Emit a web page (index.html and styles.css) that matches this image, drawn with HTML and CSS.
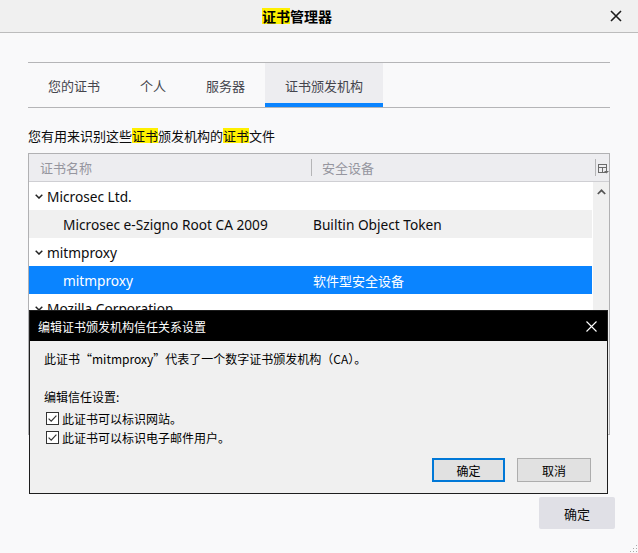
FILE: index.html
```html
<!DOCTYPE html>
<html lang="zh-CN">
<head>
    <meta charset="UTF-8">
    <title>证书管理器</title>
    <link rel="stylesheet" href="styles.css">
</head>
<body>

<div class="window">

    <header class="titlebar">
        <h1 class="title"><mark>证书</mark>管理器</h1>
        <button class="win-close" aria-label="关闭">
            <svg width="12" height="12" viewBox="0 0 12 12"><path d="M1 1 L11 11 M11 1 L1 11" stroke="#1b1b1b" stroke-width="1.6"/></svg>
        </button>
    </header>

    <main class="content">

        <nav class="tabs">
            <button class="tab">您的证书</button>
            <button class="tab">个人</button>
            <button class="tab">服务器</button>
            <button class="tab active">证书颁发机构</button>
        </nav>

        <p class="intro">您有用来识别这些<mark>证书</mark>颁发机构的<mark>证书</mark>文件</p>

        <div class="tree">
            <div class="tree-head">
                <div class="col col-name">证书名称</div>
                <span class="col-sep"></span>
                <div class="col col-device">安全设备</div>
                <span class="col-sep"></span>
                <div class="col-picker">
                    <svg width="11" height="10" viewBox="0 0 11 10">
                        <rect x="0.5" y="0.5" width="8" height="8" fill="none" stroke="#6b6b6b"/>
                        <path d="M0.5 3.5 H8.5 M4.5 3.5 V8.5" stroke="#6b6b6b"/>
                        <path d="M6 7 H11 L8.5 9.6 Z" fill="#6b6b6b"/>
                    </svg>
                </div>
            </div>

            <div class="tree-body">
                <div class="rows">
                    <div class="row group">
                        <svg class="twisty" width="8" height="5" viewBox="0 0 8 5"><path d="M0.7 0.7 L4 4 L7.3 0.7" fill="none" stroke="#222" stroke-width="1.5"/></svg>
                        <span>Microsec Ltd.</span>
                    </div>
                    <div class="row child alt">
                        <span class="cell-name">Microsec e-Szigno Root CA 2009</span>
                        <span class="cell-device">Builtin Object Token</span>
                    </div>
                    <div class="row group">
                        <svg class="twisty" width="8" height="5" viewBox="0 0 8 5"><path d="M0.7 0.7 L4 4 L7.3 0.7" fill="none" stroke="#222" stroke-width="1.5"/></svg>
                        <span>mitmproxy</span>
                    </div>
                    <div class="row child selected">
                        <span class="cell-name">mitmproxy</span>
                        <span class="cell-device cjk">软件型安全设备</span>
                    </div>
                    <div class="row group">
                        <svg class="twisty" width="8" height="5" viewBox="0 0 8 5"><path d="M0.7 0.7 L4 4 L7.3 0.7" fill="none" stroke="#222" stroke-width="1.5"/></svg>
                        <span>Mozilla Corporation</span>
                    </div>
                </div>
                <div class="scrollbar">
                    <svg width="9" height="6" viewBox="0 0 9 6"><path d="M0.8 5 L4.5 1.3 L8.2 5" fill="none" stroke="#555" stroke-width="1.7"/></svg>
                </div>
            </div>
        </div>

    </main>

    <div class="footer">
        <button class="btn">确定</button>
    </div>

    <!-- modal for editing CA trust -->
    <div class="dialog">
        <div class="dialog-bar">
            <span>编辑证书颁发机构信任关系设置</span>
            <svg width="11" height="11" viewBox="0 0 11 11"><path d="M0.5 0.5 L10.5 10.5 M10.5 0.5 L0.5 10.5" stroke="#fff" stroke-width="1.1"/></svg>
        </div>
        <div class="dialog-body">
            <p class="line">此证书“mitmproxy”代表了一个数字证书颁发机构（CA）。</p>
            <p class="line heading">编辑信任设置:</p>
            <label class="check">
                <svg width="13" height="13" viewBox="0 0 13 13"><rect x="0.5" y="0.5" width="12" height="12" fill="#fff" stroke="#333"/><path d="M2.6 6.6 L5.2 9.2 L10.4 3.6" fill="none" stroke="#333" stroke-width="1.2"/></svg>
                此证书可以标识网站。
            </label>
            <label class="check">
                <svg width="13" height="13" viewBox="0 0 13 13"><rect x="0.5" y="0.5" width="12" height="12" fill="#fff" stroke="#333"/><path d="M2.6 6.6 L5.2 9.2 L10.4 3.6" fill="none" stroke="#333" stroke-width="1.2"/></svg>
                此证书可以标识电子邮件用户。
            </label>
            <div class="dialog-actions">
                <button class="dbtn default">确定</button>
                <button class="dbtn">取消</button>
            </div>
        </div>
    </div>

    <svg class="grip" width="9" height="9" viewBox="0 0 9 9">
        <rect x="7" y="1" width="1" height="1" fill="#aaa"/>
        <rect x="4" y="4" width="1" height="1" fill="#aaa"/>
        <rect x="7" y="4" width="1" height="1" fill="#aaa"/>
        <rect x="1" y="7" width="1" height="1" fill="#aaa"/>
        <rect x="4" y="7" width="1" height="1" fill="#aaa"/>
        <rect x="7" y="7" width="1" height="1" fill="#aaa"/>
    </svg>

</div>

</body>
</html>
```

FILE: styles.css
```css
body {
    margin: 0;
    font-family: "Noto Sans CJK SC", sans-serif;
}

button {
    font: inherit;
}

mark {
    background: #fff000;
    color: inherit;
}

.window {
    position: relative;
    width: 638px;
    height: 553px;
    overflow: hidden;
    background: #f9f9fa;
}

/* window title */
.titlebar {
    display: flex;
    align-items: center;
    height: 32px;
    padding-left: 262px;
    background: #f0f0f0;
    border-bottom: 1px solid #bcbcbc;
}
.title {
    flex: 1;
    margin: 0;
    font-size: 14px;
    font-weight: bold;
    color: #000;
    line-height: 16px;
}
.title mark {
    display: inline-block;
    line-height: 16px;
}
.win-close {
    display: flex;
    width: 32px;
    height: 32px;
    margin-right: 6px;
    padding: 0;
    align-items: center;
    justify-content: center;
    border: 0;
    background: none;
}

.content {
    padding: 29px 28px 0 28px;
}

/* tabs */
.tabs {
    display: flex;
    height: 44px;
    border-top: 1px solid #b5b5b7;
    border-bottom: 1px solid #b5b5b7;
}
.tab {
    padding: 0 20px;
    border: 0;
    background: none;
    font-size: 13px;
    color: #45454d;
}
.tab.active {
    padding-top: 4px;
    background: #ededf0;
    border-bottom: 4px solid #0a84ff;
}

.intro {
    margin: 20px 0 10px;
    font-size: 13px;
    line-height: 15px;
    color: #0c0c0d;
}
.intro mark {
    display: inline-block;
    line-height: 15px;
}

/* certificate tree */
.tree {
    height: 280px;
    border: 1px solid #b1b1b3;
    background: #fff;
    font-size: 13px;
}
.tree-head {
    display: flex;
    align-items: center;
    height: 27px;
    background: #ededf0;
    border-bottom: 1px solid #cfcfd3;
    color: #96969f;
}
.col-name {
    width: 271px;
    padding-left: 11px;
}
.col-device {
    flex: 1;
    padding-left: 10px;
}
.col-sep {
    width: 1px;
    height: 17px;
    background: #b5b5b7;
}
.col-picker {
    display: flex;
    width: 13px;
    justify-content: flex-end;
    padding-top: 2px;
}

.tree-body {
    display: flex;
    gap: 1px;
    height: 252px;
}
.rows {
    flex: 1;
}
.row {
    display: flex;
    align-items: center;
    height: 28px;
    font-family: "Noto Sans", "Noto Sans CJK SC", sans-serif;
    font-size: 13.7px;
    color: #0c0c0d;
}
.row.group {
    padding-left: 6px;
    gap: 4px;
}
.row.alt {
    background: #f0f0f0;
}
.row.selected {
    background: #0a84ff;
    color: #fff;
}
.cell-name {
    width: 250px;
    padding-left: 34px;
}
.cjk {
    font-size: 13px;
}
.scrollbar {
    display: flex;
    width: 16px;
    justify-content: center;
    padding-top: 7px;
    background: #f0f0f0;
}

.footer {
    display: flex;
    justify-content: flex-end;
    padding: 62px 23px 0 0;
}
.btn {
    width: 76px;
    height: 32px;
    border: 0;
    border-radius: 2px;
    background: #e0e0e6;
    font-size: 13px;
    color: #0c0c0d;
}

/* modal dialog over the tree */
.dialog {
    position: absolute;
    left: 29px;
    top: 310px;
    display: flex;
    flex-direction: column;
    width: 577px;
    height: 182px;
    border: 1px solid #1e1e1e;
    background: #f0f0f0;
    font-size: 12px;
    color: #000;
}
.dialog-bar {
    display: flex;
    align-items: center;
    justify-content: space-between;
    height: 30px;
    padding: 0 10px 0 8px;
    background: #000;
    color: #fff;
}
.dialog-body {
    flex: 1;
    display: flex;
    flex-direction: column;
    padding: 9px 16px 11px 14px;
}
.line {
    margin: 0;
    line-height: 18px;
}
.line.heading {
    margin-top: 20px;
    margin-bottom: 3px;
}
.check {
    display: flex;
    align-items: center;
    gap: 3px;
    height: 19px;
    padding-left: 2px;
}
.dialog-actions {
    display: flex;
    justify-content: flex-end;
    gap: 12px;
    margin-top: auto;
}
.dbtn {
    width: 74px;
    height: 24px;
    padding: 0;
    border: 1px solid #adadad;
    background: #e1e1e1;
    font-size: 12px;
    color: #000;
}
.dbtn.default {
    width: 73px;
    border: 2px solid #0078d7;
}

.grip {
    position: absolute;
    right: 0;
    bottom: 0;
}
```
